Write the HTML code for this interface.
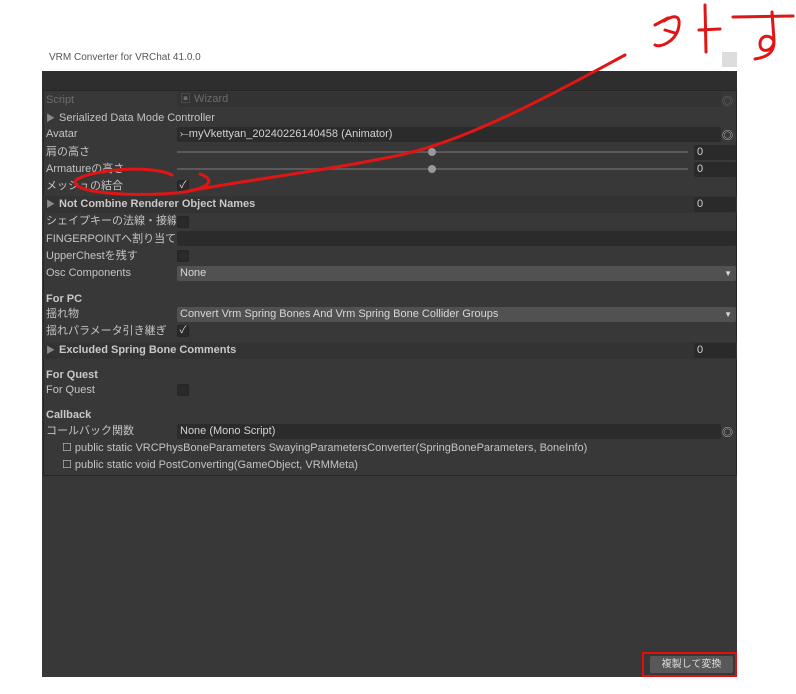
<!DOCTYPE html>
<html><head><meta charset="utf-8"><style>
*{margin:0;padding:0;box-sizing:border-box}
body{width:796px;height:694px;background:#fff;position:relative;overflow:hidden;font-family:"Liberation Sans","Noto Sans CJK JP",sans-serif;font-size:11px;color:#c4c4c4}
.a{position:absolute;white-space:nowrap}
.lbl{position:absolute;left:46px;max-width:130px;overflow:hidden;white-space:nowrap;font-size:11px;line-height:14px}
.wide{max-width:none}
.fld{position:absolute;left:177px;right:61px;height:15px;background:#2b2b2b;border-radius:2px;padding-left:3px;line-height:15px;font-size:11px;color:#d2d2d2}
.cb{position:absolute;left:177px;width:12px;height:12px;background:#2a2a2a;border-radius:2px;border:1px solid #252525}
.num{position:absolute;left:694px;width:42px;height:15px;background:#2a2a2a;border-radius:2px;padding-left:3px;line-height:15px;color:#d2d2d2}
.drop{position:absolute;left:177px;width:559px;height:15px;background:#515151;border-radius:2px;padding-left:3px;line-height:15px;color:#d8d8d8}
.b{font-weight:bold;color:#c8c8c8}
.tri{color:#8a8a8a;font-size:9px;margin-right:4px}
</style></head><body>
<div class="a" style="left:49px;top:52px;font-size:10px;color:#555">VRM Converter for VRChat 41.0.0</div>
<div class="a" style="left:722px;top:52px;width:15px;height:15px;background:#ddd"></div>
<div class="a" style="left:42px;top:71px;width:695px;height:606px;background:#383838"></div>
<div class="a" style="left:42px;top:71px;width:695px;height:19px;background:#2e2e2e"></div>
<div class="a" style="left:43px;top:90px;width:694px;height:386px;border:1px solid #262626"></div>

<div class="lbl" style="top:93px;color:#6c6c6c">Script</div>
<div class="fld" style="top:92px;right:75px;background:#333;color:#6c6c6c">&#9635; Wizard</div>
<div class="a" style="left:722px;top:93px;color:#6c6c6c">◎</div>
<div class="lbl wide" style="top:111px"><span class="tri">▶</span>Serialized Data Mode Controller</div>
<div class="lbl" style="top:127px">Avatar</div>
<div class="fld" style="top:127px;right:75px">⤚myVkettyan_20240226140458 (Animator)</div>
<div class="a" style="left:722px;top:127px;color:#ccc">◎</div>
<div class="lbl" style="top:145px">肩の高さ</div>
<div class="a" style="left:177px;top:151px;width:511px;height:2px;background:#5a5a5a"></div>
<div class="a" style="left:428px;top:148px;width:8px;height:8px;border-radius:50%;background:#999"></div>
<div class="num" style="top:145px">0</div>
<div class="lbl" style="top:162px">Armatureの高さ</div>
<div class="a" style="left:177px;top:168px;width:511px;height:2px;background:#5a5a5a"></div>
<div class="a" style="left:428px;top:165px;width:8px;height:8px;border-radius:50%;background:#999"></div>
<div class="num" style="top:162px">0</div>
<div class="lbl" style="top:179px">メッシュの結合</div>
<div class="cb" style="top:180px;color:#ddd;font-size:10px;line-height:10px;text-align:center">✓</div>
<div class="a" style="left:42px;top:196px;width:695px;height:17px;background:#333"></div>
<div class="lbl b wide" style="top:197px"><span class="tri">▶</span>Not Combine Renderer Object Names</div>
<div class="num" style="top:197px">0</div>
<div class="lbl" style="top:214px">シェイプキーの法線・接線を利用</div>
<div class="cb" style="top:216px"></div>
<div class="lbl" style="top:232px">FINGERPOINTへ割り当てる表情</div>
<div class="fld" style="top:231px;right:60px"></div>
<div class="lbl" style="top:249px">UpperChestを残す</div>
<div class="cb" style="top:250px"></div>
<div class="lbl" style="top:266px">Osc Components</div>
<div class="drop" style="top:266px">None<span style="position:absolute;right:4px;font-size:8px">▼</span></div>
<div class="lbl b" style="top:292px">For PC</div>
<div class="lbl" style="top:307px">揺れ物</div>
<div class="drop" style="top:307px">Convert Vrm Spring Bones And Vrm Spring Bone Collider Groups<span style="position:absolute;right:4px;font-size:8px">▼</span></div>
<div class="lbl" style="top:324px">揺れパラメータ引き継ぎ</div>
<div class="cb" style="top:325px;color:#ddd;font-size:10px;line-height:10px;text-align:center">✓</div>
<div class="a" style="left:42px;top:342px;width:695px;height:17px;background:#333"></div>
<div class="lbl b wide" style="top:343px"><span class="tri">▶</span>Excluded Spring Bone Comments</div>
<div class="num" style="top:343px">0</div>
<div class="lbl b" style="top:368px">For Quest</div>
<div class="lbl" style="top:383px">For Quest</div>
<div class="cb" style="top:384px"></div>
<div class="lbl b" style="top:408px">Callback</div>
<div class="lbl" style="top:424px">コールバック関数</div>
<div class="fld" style="top:424px;right:75px">None (Mono Script)</div>
<div class="a" style="left:722px;top:424px;color:#ccc">◎</div>
<div class="a" style="left:62px;top:441px">☐ public static VRCPhysBoneParameters SwayingParametersConverter(SpringBoneParameters, BoneInfo)</div>
<div class="a" style="left:62px;top:458px">☐ public static void PostConverting(GameObject, VRMMeta)</div>

<div class="a" style="left:650px;top:656px;width:83px;height:17px;background:#585858;border-radius:2px;text-align:center;line-height:17px;color:#ddd;font-size:10px">複製して変換</div>
<div class="a" style="left:642px;top:652px;width:95px;height:25px;border:2px solid #e01010"></div>

<svg class="a" style="left:0;top:0" width="796" height="694" viewBox="0 0 796 694">
<g fill="none" stroke="#e01515" stroke-width="3" stroke-linecap="round">
<path d="M172 175 C150 164 90 170 76 180 C68 190 110 196 160 194 C210 192 218 180 200 174"/>
<path d="M188 191 C260 178 330 170 400 155 C470 140 560 90 625 55"/>
<path d="M655 25 L668 18 M664 21 C675 14 682 15 678 30 C674 42 660 48 655 45 M665 30 L675 33"/>
<path d="M705 5 L706 52 M699 30 L720 29"/>
<path d="M733 17 L793 16 M772 12 L774 40 C774 52 760 54 760 44 C760 34 772 34 774 42 C774 52 768 57 755 59"/>
</g></svg>
</body></html>
